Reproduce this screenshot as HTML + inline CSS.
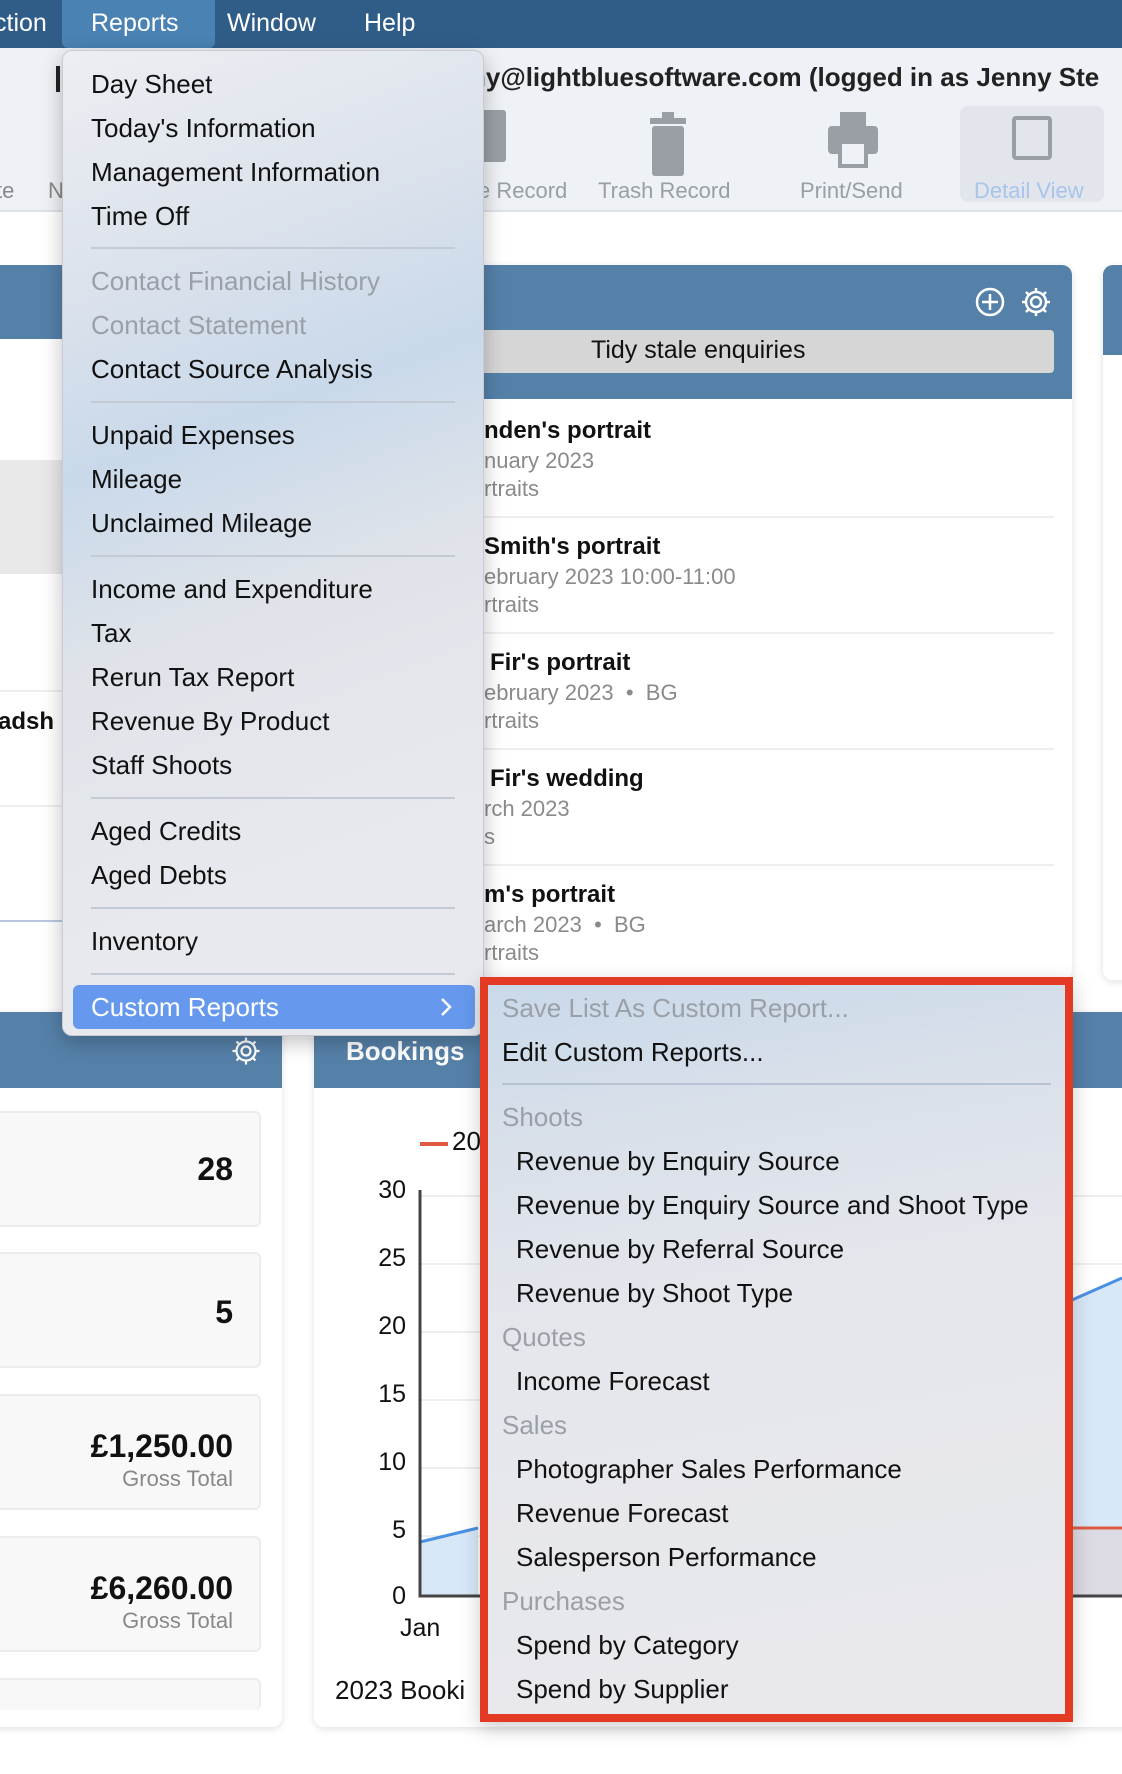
<!DOCTYPE html>
<html><head><meta charset="utf-8"><style>
*{margin:0;padding:0;box-sizing:border-box}
body{width:1122px;height:1774px;position:relative;overflow:hidden;background:#fff;font-family:"Liberation Sans",Arial,sans-serif}
.a{position:absolute;white-space:nowrap}
.mb{font-size:25px;color:#fff;top:9px}
.mi{position:absolute;left:28px;font-size:26px;color:#111;white-space:nowrap;line-height:30px}
.sep{position:absolute;left:28px;right:28px;height:2px;background:#c3cad4}
.si{position:absolute;font-size:26px;color:#111;white-space:nowrap;line-height:30px}
.mi.dis,.si.dis{color:#9aa0a8}
.t{font-weight:bold;font-size:24px;color:#111}
.s{font-size:22px;color:#8a8a8a}
.card{position:absolute;left:-10px;width:271px;background:#f8f8f8;border:2px solid #ececec;border-radius:6px}
.num{position:absolute;right:26px;font-size:32px;font-weight:bold;color:#111}
.gt{position:absolute;right:26px;font-size:22px;color:#888}
.yl{position:absolute;font-size:25px;color:#111;width:40px;text-align:right;left:366px}
</style></head><body>
<div class="a" style="left:0;top:0;width:1122px;height:48px;background:#305d88"></div>
<div class="a" style="left:62px;top:0;width:153px;height:48px;background:#4a82b3;border-radius:0 0 6px 6px"></div>
<div class="a mb" style="left:-6px">ction</div>
<div class="a mb" style="left:91px">Reports</div>
<div class="a mb" style="left:227px">Window</div>
<div class="a mb" style="left:364px">Help</div>
<div class="a" style="left:0;top:48px;width:1122px;height:164px;background:#eef1f5;border-bottom:2px solid #dfe2e6"></div>
<div class="a" style="left:470px;top:62px;font-size:26px;font-weight:bold;color:#222">ny@lightbluesoftware.com (logged in as Jenny Ste</div>
<div class="a" style="left:56px;top:66px;width:4px;height:26px;background:#222"></div>
<div class="a" style="left:-4px;top:178px;font-size:22px;color:#888">te</div>
<div class="a" style="left:48px;top:178px;font-size:22px;color:#888">N</div>
<div class="a" style="left:480px;top:110px;width:26px;height:52px;background:#9a9ea5;border-radius:3px"></div>
<div class="a" style="left:478px;top:178px;font-size:22px;color:#9a9ea5">e Record</div>
<svg class="a" style="left:648px;top:112px" width="40" height="84"><rect x="2" y="6" width="36" height="6" fill="#9a9ea5"/><rect x="14" y="0" width="12" height="6" fill="#9a9ea5"/><rect x="4" y="14" width="32" height="50" rx="3" fill="#9a9ea5"/></svg>
<div class="a" style="left:598px;top:178px;font-size:22px;color:#9a9ea5">Trash Record</div>
<svg class="a" style="left:828px;top:112px" width="50" height="60"><rect x="12" y="0" width="26" height="14" fill="#9a9ea5"/><rect x="0" y="14" width="50" height="28" rx="4" fill="#9a9ea5"/><rect x="12" y="30" width="26" height="24" fill="#eef1f5"/><rect x="12" y="30" width="26" height="24" fill="none" stroke="#9a9ea5" stroke-width="4"/></svg>
<div class="a" style="left:800px;top:178px;font-size:22px;color:#9a9ea5">Print/Send</div>
<div class="a" style="left:960px;top:106px;width:144px;height:96px;background:#e2e6ec;border-radius:8px"></div>
<div class="a" style="left:1012px;top:116px;width:40px;height:44px;border:4px solid #9a9ea5;border-radius:4px"></div>
<div class="a" style="left:974px;top:178px;font-size:22px;color:#a8c4ea">Detail View</div>
<div class="a" style="left:0;top:265px;width:70px;height:74px;background:#5580a8"></div>
<div class="a" style="left:0;top:460px;width:70px;height:114px;background:#e9e9e9"></div>
<div class="a" style="left:-2px;top:708px;font-size:24px;font-weight:bold;color:#111">adsh</div>
<div class="a" style="left:0;top:920px;width:70px;height:2px;background:#b8c8e0"></div>
<div class="a" style="left:0;top:690px;width:70px;height:2px;background:#eee"></div>
<div class="a" style="left:0;top:805px;width:70px;height:2px;background:#eee"></div>
<div class="a" style="left:440px;top:265px;width:632px;height:715px;background:#fff;border-radius:10px;box-shadow:0 2px 8px rgba(0,0,0,.12)"></div>
<div class="a" style="left:440px;top:265px;width:632px;height:134px;background:#5580a8;border-radius:10px 10px 0 0"></div>
<svg class="a" style="left:974px;top:286px" width="80" height="32"><circle cx="16" cy="16" r="13" fill="none" stroke="#fff" stroke-width="2.5"/><path d="M16 8v16M8 16h16" stroke="#fff" stroke-width="2.5"/><g transform="translate(62 16)" fill="none" stroke="#fff" stroke-width="2.5"><circle r="5"/><path d="M0-14v5M0 9v5M-14 0h5M9 0h5M-10-10l3.5 3.5M6.5 6.5l3.5 3.5M10-10l-3.5 3.5M-6.5 6.5l-3.5 3.5"/><circle r="10"/></g></svg>
<div class="a" style="left:460px;top:330px;width:594px;height:43px;background:#d6d6d6;border-radius:4px"></div>
<div class="a" style="left:591px;top:336px;font-size:25px;color:#111">Tidy stale enquiries</div>
<div class="a t" style="left:484px;top:417px">nden's portrait</div>
<div class="a s" style="left:484px;top:448px">nuary 2023</div>
<div class="a s" style="left:484px;top:476px">rtraits</div>
<div class="a" style="left:484px;top:516px;width:570px;height:2px;background:#eee"></div>
<div class="a t" style="left:484px;top:533px">Smith's portrait</div>
<div class="a s" style="left:484px;top:564px">ebruary 2023 10:00-11:00</div>
<div class="a s" style="left:484px;top:592px">rtraits</div>
<div class="a" style="left:484px;top:632px;width:570px;height:2px;background:#eee"></div>
<div class="a t" style="left:490px;top:649px">Fir's portrait</div>
<div class="a s" style="left:484px;top:680px">ebruary 2023 &nbsp;•&nbsp; BG</div>
<div class="a s" style="left:484px;top:708px">rtraits</div>
<div class="a" style="left:484px;top:748px;width:570px;height:2px;background:#eee"></div>
<div class="a t" style="left:490px;top:765px">Fir's wedding</div>
<div class="a s" style="left:484px;top:796px">rch 2023</div>
<div class="a s" style="left:484px;top:824px">s</div>
<div class="a" style="left:484px;top:864px;width:570px;height:2px;background:#eee"></div>
<div class="a t" style="left:484px;top:881px">m's portrait</div>
<div class="a s" style="left:484px;top:912px">arch 2023 &nbsp;•&nbsp; BG</div>
<div class="a s" style="left:484px;top:940px">rtraits</div>
<div class="a" style="left:1103px;top:265px;width:30px;height:715px;background:#fff;border-radius:10px;box-shadow:0 2px 8px rgba(0,0,0,.12)"></div>
<div class="a" style="left:1103px;top:265px;width:30px;height:90px;background:#5580a8;border-radius:10px 0 0 0"></div>
<div class="a" style="left:-10px;top:1012px;width:292px;height:715px;background:#fff;border-radius:10px;box-shadow:0 2px 8px rgba(0,0,0,.12)"></div>
<div class="a" style="left:-10px;top:1012px;width:292px;height:76px;background:#5580a8;border-radius:10px 10px 0 0"></div>
<svg class="a" style="left:231px;top:1036px" width="30" height="30"><g transform="translate(15 15)" fill="none" stroke="#fff" stroke-width="2.2"><circle r="4.5"/><circle r="9.5"/><path d="M0-13.5v4M0 9.5v4M-13.5 0h4M9.5 0h4M-9.5-9.5l3 3M6.5 6.5l3 3M9.5-9.5l-3 3M-6.5 6.5l-3 3"/></g></svg>
<div class="card" style="top:1111px;height:116px"><div class="num" style="top:38px">28</div></div>
<div class="card" style="top:1252px;height:116px"><div class="num" style="top:40px">5</div></div>
<div class="card" style="top:1394px;height:116px"><div class="num" style="top:32px">£1,250.00</div><div class="gt" style="top:70px">Gross Total</div></div>
<div class="card" style="top:1536px;height:116px"><div class="num" style="top:32px">£6,260.00</div><div class="gt" style="top:70px">Gross Total</div></div>
<div class="card" style="top:1678px;height:32px;border-bottom:none"></div>
<div class="a" style="left:314px;top:1012px;width:830px;height:715px;background:#fff;border-radius:10px;box-shadow:0 2px 8px rgba(0,0,0,.12)"></div>
<div class="a" style="left:314px;top:1012px;width:830px;height:76px;background:#5580a8;border-radius:10px 10px 0 0"></div>
<div class="a" style="left:346px;top:1036px;font-size:26px;font-weight:bold;color:#fff">Bookings</div>
<div class="a" style="left:420px;top:1142px;width:28px;height:4px;background:#e05a40"></div>
<div class="a" style="left:452px;top:1126px;font-size:26px;color:#111">20</div>
<div class="yl" style="top:1176px">30</div>
<div class="yl" style="top:1244px">25</div>
<div class="yl" style="top:1312px">20</div>
<div class="yl" style="top:1380px">15</div>
<div class="yl" style="top:1448px">10</div>
<div class="yl" style="top:1516px">5</div>
<div class="yl" style="top:1582px">0</div>
<svg class="a" style="left:418px;top:1180px" width="704" height="420"><g stroke="#eee" stroke-width="2"><path d="M0 16H704M0 84H704M0 152H704M0 220H704M0 288H704M0 356H704"/></g><path d="M2 362L60 348V416H2Z" fill="#d8e8f8"/><path d="M2 362L60 348" stroke="#4a90e2" stroke-width="3"/><path d="M654 120L704 98V416H654Z" fill="#d8e8f8"/><path d="M654 120L704 98" stroke="#4a90e2" stroke-width="3"/><path d="M654 348H704V416H654Z" fill="#dcdbe4"/><path d="M654 348H704" stroke="#e05a40" stroke-width="3"/><path d="M2 10V416H704" fill="none" stroke="#444" stroke-width="3"/></svg>
<div class="a" style="left:400px;top:1614px;font-size:25px;color:#111">Jan</div>
<div class="a" style="left:335px;top:1675px;font-size:26px;color:#111">2023 Booki</div>
<div class="a" style="left:62px;top:50px;width:422px;height:986px;border-radius:10px;background:linear-gradient(160deg,#eceef2 0%,#dde3ec 20%,#c9d9ea 38%,#dfe3e9 55%,#e8e9ee 80%,#e8e9ee 100%);box-shadow:0 6px 20px rgba(0,0,0,.25);border:1px solid #c8ccd2">
<div class="mi" style="top:18px">Day Sheet</div>
<div class="mi" style="top:62px">Today's Information</div>
<div class="mi" style="top:106px">Management Information</div>
<div class="mi" style="top:150px">Time Off</div>
<div class="sep" style="top:196px"></div>
<div class="mi dis" style="top:215px">Contact Financial History</div>
<div class="mi dis" style="top:259px">Contact Statement</div>
<div class="mi" style="top:303px">Contact Source Analysis</div>
<div class="sep" style="top:350px"></div>
<div class="mi" style="top:369px">Unpaid Expenses</div>
<div class="mi" style="top:413px">Mileage</div>
<div class="mi" style="top:457px">Unclaimed Mileage</div>
<div class="sep" style="top:504px"></div>
<div class="mi" style="top:523px">Income and Expenditure</div>
<div class="mi" style="top:567px">Tax</div>
<div class="mi" style="top:611px">Rerun Tax Report</div>
<div class="mi" style="top:655px">Revenue By Product</div>
<div class="mi" style="top:699px">Staff Shoots</div>
<div class="sep" style="top:746px"></div>
<div class="mi" style="top:765px">Aged Credits</div>
<div class="mi" style="top:809px">Aged Debts</div>
<div class="sep" style="top:856px"></div>
<div class="mi" style="top:875px">Inventory</div>
<div class="sep" style="top:922px"></div>
<div class="a" style="left:10px;top:934px;width:402px;height:44px;background:#6699ee;border-radius:6px"></div>
<div class="mi" style="top:941px;color:#fff">Custom Reports</div>
<svg class="a" style="left:376px;top:946px" width="14" height="20"><path d="M3 2l8 8-8 8" fill="none" stroke="#fff" stroke-width="2.5"/></svg>
</div>
<div class="a" style="left:480px;top:977px;width:593px;height:745px;border:8px solid #e33b23;background:linear-gradient(170deg,#c9d9ea 0%,#d9e0ea 20%,#e6e7ec 45%,#e8e8ed 100%);box-shadow:0 6px 20px rgba(0,0,0,.2)">
<div class="si dis" style="left:14px;top:8px">Save List As Custom Report...</div>
<div class="si" style="left:14px;top:52px">Edit Custom Reports...</div>
<div class="a" style="left:14px;right:14px;top:98px;height:2px;background:#b7c3d2"></div>
<div class="si dis" style="left:14px;top:117px">Shoots</div>
<div class="si" style="left:28px;top:161px">Revenue by Enquiry Source</div>
<div class="si" style="left:28px;top:205px">Revenue by Enquiry Source and Shoot Type</div>
<div class="si" style="left:28px;top:249px">Revenue by Referral Source</div>
<div class="si" style="left:28px;top:293px">Revenue by Shoot Type</div>
<div class="si dis" style="left:14px;top:337px">Quotes</div>
<div class="si" style="left:28px;top:381px">Income Forecast</div>
<div class="si dis" style="left:14px;top:425px">Sales</div>
<div class="si" style="left:28px;top:469px">Photographer Sales Performance</div>
<div class="si" style="left:28px;top:513px">Revenue Forecast</div>
<div class="si" style="left:28px;top:557px">Salesperson Performance</div>
<div class="si dis" style="left:14px;top:601px">Purchases</div>
<div class="si" style="left:28px;top:645px">Spend by Category</div>
<div class="si" style="left:28px;top:689px">Spend by Supplier</div>
</div>
</body></html>
